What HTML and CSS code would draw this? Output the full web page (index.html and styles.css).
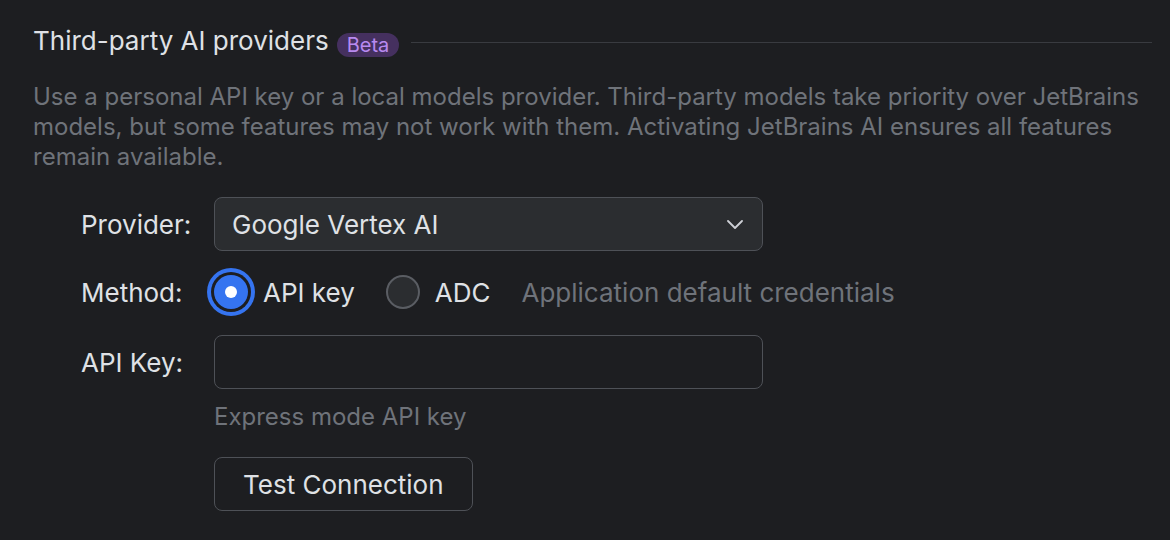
FILE: index.html
```html
<!DOCTYPE html>
<html lang="en">
<head>
    <meta charset="UTF-8">
    <title>Third-party AI providers</title>
    <link rel="stylesheet" href="styles.css">
</head>
<body>
    <div class="settings">
        <div class="group-head">
            <span class="group-title">Third-party AI providers</span>
            <span class="badge">Beta</span>
            <span class="rule"></span>
        </div>
        <p class="desc">Use a personal API key or a local models provider. Third-party models take priority over JetBrains models, but some features may not work with them. Activating JetBrains AI ensures all features remain available.</p>

        <div class="form">
            <div class="row">
                <label class="label">Provider:</label>
                <div class="combo">
                    <span>Google Vertex AI</span>
                    <svg class="chevron" width="16" height="9" viewBox="0 0 16 9">
                        <path d="M1 1l7 7 7-7" fill="none" stroke="#ced0d6" stroke-width="1.8" stroke-linecap="round" stroke-linejoin="round"/>
                    </svg>
                </div>
            </div>

            <div class="row method">
                <span class="label">Method:</span>
                <span class="radio checked"></span>
                <span class="radio-text">API key</span>
                <span class="radio"></span>
                <span class="radio-text">ADC</span>
                <span class="note">Application default credentials</span>
            </div>

            <div class="row key">
                <label class="label">API Key:</label>
                <div class="field"></div>
            </div>
            <div class="hint">Express mode API key</div>
            <button class="btn">Test Connection</button>
        </div>
    </div>
</body>
</html>
```

FILE: styles.css
```css
body {
    margin: 0;
    background: #1d1e21;
    color: #dfe1e5;
    font-family: 'Inter', 'Noto Sans', sans-serif;
}

.settings {
    padding: 25px 18px 0 33px;
}

/* Group header */
.group-head {
    display: flex;
    align-items: center;
    height: 32px;
}

.group-title {
    font-size: 26px;
    line-height: 32px;
}

.badge {
    margin-left: 8px;
    margin-top: 8px;
    height: 24px;
    padding: 0 10px;
    border-radius: 12px;
    background: #45305f;
    color: #b88af0;
    font-size: 20px;
    line-height: 24px;
}

.rule {
    flex: 1;
    height: 1px;
    margin-left: 12px;
    margin-top: 3px;
    background: #393b40;
}

.desc {
    margin: 25px 0 0;
    font-size: 24px;
    line-height: 30px;
    color: #6f737a;
}

/* Form */
.form {
    padding-left: 48px;
    margin-top: 25px;
}

.row {
    display: flex;
    align-items: center;
}

.label {
    width: 133px;
    font-size: 26px;
}

.combo {
    box-sizing: border-box;
    width: 549px;
    height: 54px;
    display: flex;
    align-items: center;
    justify-content: space-between;
    padding: 0 19px 0 17px;
    background: #2b2d30;
    border: 1px solid #4e5157;
    border-radius: 8px;
    font-size: 26px;
}

.method {
    margin-top: 17px;
    height: 48px;
}

.radio {
    box-sizing: border-box;
    width: 34px;
    height: 34px;
    border-radius: 50%;
    background: #2b2d30;
    border: 2px solid #5a5d63;
}

.radio.checked {
    position: relative;
    background: #3574f0;
    border: none;
    box-shadow: 0 0 0 3px #1d1e21, 0 0 0 7px #3574f0;
}

.radio.checked::after {
    content: '';
    position: absolute;
    width: 12px;
    height: 12px;
    top: 11px;
    left: 11px;
    border-radius: 50%;
    background: #fff;
}

.radio-text {
    margin-left: 15px;
    margin-right: 31px;
    font-size: 26px;
}

.note {
    margin-left: 0;
    font-size: 26px;
    color: #6f737a;
}

.key {
    margin-top: 19px;
}

.field {
    box-sizing: border-box;
    width: 549px;
    height: 54px;
    border: 1px solid #4e5157;
    border-radius: 8px;
}

.hint {
    margin: 13px 0 0 133px;
    font-size: 24px;
    line-height: 30px;
    color: #6f737a;
}

.btn {
    display: block;
    margin: 25px 0 0 133px;
    height: 54px;
    padding: 0 28px;
    background: transparent;
    border: 1px solid #4e5157;
    border-radius: 8px;
    color: #dfe1e5;
    font-family: inherit;
    font-size: 26px;
}
```
